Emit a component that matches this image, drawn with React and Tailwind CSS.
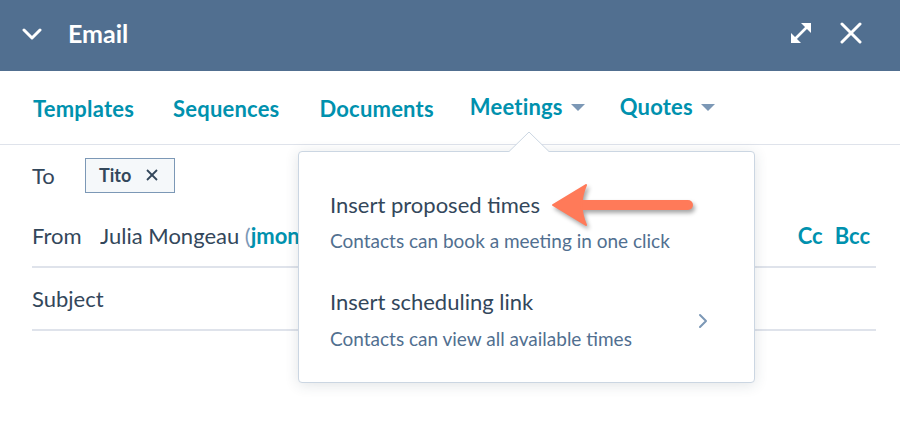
import React from "react";

const font = { fontFamily: "Lato, 'Noto Sans', sans-serif" };

function Caret() {
  return (
    <svg width="14" height="7" viewBox="0 0 14 7" className="ml-[8px] mt-[2px]">
      <polygon points="0,0 14,0 7,7" fill="#7c98b6" />
    </svg>
  );
}

export default function App() {
  return (
    <div className="relative w-[900px] h-[435px] overflow-hidden bg-white" style={font}>
      {/* Header */}
      <div className="h-[71px] bg-[#516f90] flex items-center pl-[22px] pr-[38px] pb-[5px]">
        <svg width="20" height="12" viewBox="0 0 20 12" className="mt-[2px]">
          <polyline points="2,2 10,10 18,2" fill="none" stroke="white" strokeWidth="3" strokeLinecap="round" strokeLinejoin="round" />
        </svg>
        <span className="ml-[26px] text-white text-[25px] font-bold leading-[30px]">Email</span>
        <div className="ml-auto flex items-center gap-[28px]">
          <svg width="22" height="22" viewBox="0 0 22 22">
            <line x1="5" y1="17" x2="17" y2="5" stroke="white" strokeWidth="2.6" />
            <polygon points="11,1 21,1 21,11" fill="white" />
            <polygon points="1,11 1,21 11,21" fill="white" />
          </svg>
          <svg width="22" height="22" viewBox="0 0 22 22">
            <line x1="2" y1="2" x2="20" y2="20" stroke="white" strokeWidth="3" strokeLinecap="round" />
            <line x1="20" y1="2" x2="2" y2="20" stroke="white" strokeWidth="3" strokeLinecap="round" />
          </svg>
        </div>
      </div>

      {/* Tabs */}
      <div className="h-[74px] border-b border-[#dfe3eb] flex items-center pl-[33px] text-[#0091ae] text-[22px] font-bold tracking-[0.2px]">
        <span className="mt-[1px]">Templates</span>
        <span className="ml-[39px] mt-[1px]">Sequences</span>
        <span className="ml-[40px] mt-[1px]">Documents</span>
        <span className="ml-[36px] flex items-center -mt-[2px]">Meetings<Caret /></span>
        <span className="ml-[35px] flex items-center -mt-[2px]">Quotes<Caret /></span>
      </div>

      {/* Form */}
      <div className="pl-[32px] pr-[24px] text-[#33475b] text-[22px]">
        <div className="h-[60px] flex items-center">
          <span className="w-[53px]">To</span>
          <span className="h-[35px] flex items-center pl-[13px] pr-[16px] bg-[#f5f8fa] border border-[#7c98b6] text-[18px] font-bold">
            Tito
            <svg width="12" height="12" viewBox="0 0 12 12" className="ml-[15px]">
              <line x1="1" y1="1" x2="11" y2="11" stroke="#33475b" strokeWidth="1.8" />
              <line x1="11" y1="1" x2="1" y2="11" stroke="#33475b" strokeWidth="1.8" />
            </svg>
          </span>
        </div>
        <div className="h-[63px] flex items-center border-b-2 border-[#dfe3eb]">
          <span className="w-[68px]">From</span>
          <span className="w-[198px] overflow-hidden whitespace-nowrap">
            Julia Mongeau <span className="text-[#7c98b6]">(</span>
            <span className="text-[#0091ae] font-bold">jmon</span>
          </span>
          <span className="ml-auto text-[#0091ae] font-bold">Cc</span>
          <span className="ml-[12px] mr-[6px] text-[#0091ae] font-bold">Bcc</span>
        </div>
        <div className="h-[63px] flex items-center border-b-2 border-[#dfe3eb]">
          <span>Subject</span>
        </div>
      </div>

      {/* Dropdown popover */}
      <div className="absolute left-[298px] top-[151px] w-[457px] h-[232px] bg-white border border-[#cbd6e2] rounded-[4px] shadow-[0_2px_14px_rgba(45,62,80,0.14)]">
        <svg width="42" height="22" viewBox="0 0 42 22" className="absolute left-[209px] -top-[21px]">
          <polygon points="0,21.5 21,1 42,21.5" fill="white" stroke="#cbd6e2" strokeWidth="1" />
          <rect x="0" y="21" width="42" height="2" fill="white" />
        </svg>
        <div className="pl-[31px] pr-[46px] pt-[38px]">
          <div className="text-[22px] text-[#33475b] leading-[30px]">Insert proposed times</div>
          <div className="mt-[8px] text-[19px] text-[#516f90] leading-[26px]">Contacts can book a meeting in one click</div>
          <div className="mt-[33px] flex items-center">
            <div className="flex-1">
              <div className="text-[22px] text-[#33475b] leading-[30px]">Insert scheduling link</div>
              <div className="mt-[9px] text-[19px] text-[#516f90] leading-[26px]">Contacts can view all available times</div>
            </div>
            <svg width="10" height="16" viewBox="0 0 10 16" className="mt-[2px]">
              <polyline points="2,2 8,8 2,14" fill="none" stroke="#7c98b6" strokeWidth="2" strokeLinecap="round" strokeLinejoin="round" />
            </svg>
          </div>
        </div>
      </div>

      {/* Orange annotation arrow */}
      <svg
        width="160"
        height="60"
        viewBox="0 0 160 60"
        className="absolute left-[545px] top-[175px]"
        style={{ filter: "drop-shadow(2px 3px 2px rgba(0,0,0,0.35))" }}
      >
        <line x1="36" y1="30" x2="143" y2="30" stroke="#ff7a59" strokeWidth="10" strokeLinecap="round" />
        <path d="M8 30 L41 10 Q36 22 37 30 Q36 38 41 50 Z" fill="#ff7a59" stroke="#ff7a59" strokeWidth="2" strokeLinejoin="round" />
      </svg>
    </div>
  );
}
